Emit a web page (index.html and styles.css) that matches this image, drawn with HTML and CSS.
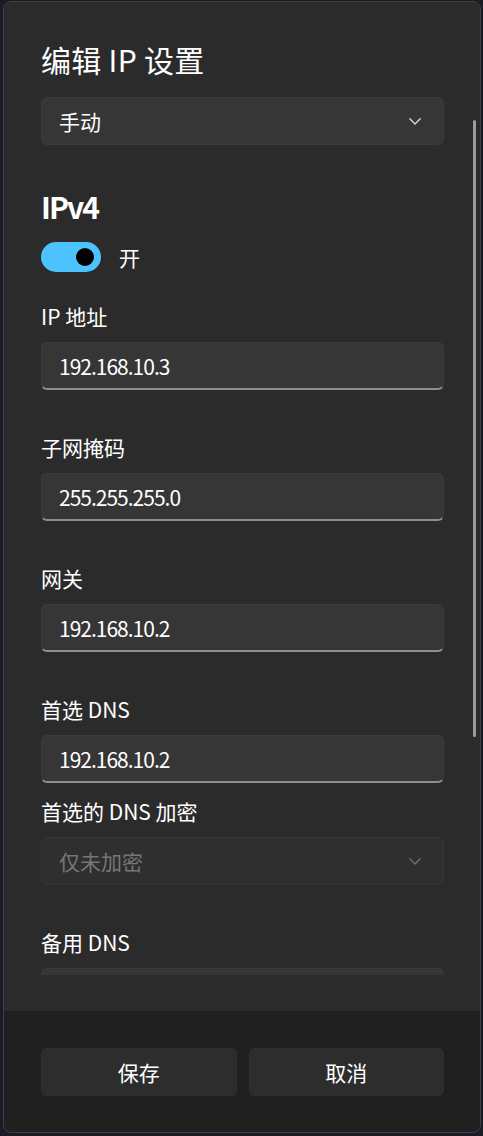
FILE: index.html
```html
<!DOCTYPE html>
<html lang="zh-CN">
<head>
<meta charset="utf-8">
<title>编辑 IP 设置</title>
<link rel="stylesheet" href="styles.css">
</head>
<body>
<div class="dialog">
  <div class="content">
    <div class="scroll">
      <h1 class="title">编辑 IP 设置</h1>
      <div class="combo">
        <span>手动</span>
        <svg class="chev" width="12" height="7" viewBox="0 0 12 7"><path d="M0.8 0.8 L6 6 L11.2 0.8" fill="none" stroke="#d6d6d6" stroke-width="1.4" stroke-linecap="round" stroke-linejoin="round"/></svg>
      </div>
      <h2 class="section">IPv4</h2>
      <div class="toggle-row">
        <div class="toggle"><div class="knob"></div></div>
        <span class="toggle-label">开</span>
      </div>
      <div class="label first">IP 地址</div>
      <div class="field">192.168.10.3</div>
      <div class="label">子网掩码</div>
      <div class="field">255.255.255.0</div>
      <div class="label">网关</div>
      <div class="field">192.168.10.2</div>
      <div class="label">首选 DNS</div>
      <div class="field">192.168.10.2</div>
      <div class="label tight">首选的 DNS 加密</div>
      <div class="combo disabled">
        <span>仅未加密</span>
        <svg class="chev" width="12" height="7" viewBox="0 0 12 7"><path d="M0.8 0.8 L6 6 L11.2 0.8" fill="none" stroke="#707070" stroke-width="1.4" stroke-linecap="round" stroke-linejoin="round"/></svg>
      </div>
      <div class="label">备用 DNS</div>
      <div class="field"></div>
    </div>
    <div class="scrollbar"></div>
  </div>
  <div class="footer">
    <div class="btn">保存</div>
    <div class="btn">取消</div>
  </div>
</div>
</body>
</html>
```
FILE: styles.css
```css
html, body {
  margin: 0;
  padding: 0;
}
body {
  width: 483px;
  height: 1136px;
  overflow: hidden;
  background: #1a1b25;
  font-family: "Noto Sans CJK SC", "Noto Sans", sans-serif;
  color: #ffffff;
}
.dialog {
  margin: 1px 2px 0 3px;
  height: 1132px;
  box-sizing: border-box;
  border: 1px solid #404040;
  border-radius: 8px;
  overflow: hidden;
  display: flex;
  flex-direction: column;
  background: #2b2b2b;
}
.content {
  position: relative;
  flex: 0 0 1009px;
  box-sizing: border-box;
  padding-bottom: 36px;
  background: #2b2b2b;
}
.scroll {
  height: 973px;
  box-sizing: border-box;
  overflow: hidden;
  padding: 37px 36px 0 37px;
  display: flex;
  flex-direction: column;
}
.title {
  margin: 0;
  font-size: 30px;
  line-height: 40px;
  font-weight: 400;
  letter-spacing: 0.3px;
}
.combo {
  margin-top: 18px;
  height: 48px;
  flex: 0 0 48px;
  box-sizing: border-box;
  border: 1px solid #3a3a3a;
  border-radius: 6px;
  background: #363636;
  display: flex;
  align-items: center;
  justify-content: space-between;
  padding: 0 22px 0 17px;
  font-size: 21px;
}
.combo.disabled {
  margin-top: 11px;
  background: #2f2f2f;
  border-color: #353535;
  color: #767676;
}
.section {
  margin: 41px 0 0 0;
  font-size: 30px;
  line-height: 40px;
  font-weight: 700;
  letter-spacing: -2px;
}
.toggle-row {
  margin-top: 16px;
  display: flex;
  align-items: center;
  gap: 18px;
  height: 30px;
}
.toggle {
  width: 60px;
  height: 30px;
  border-radius: 15px;
  background: #4cc2ff;
  display: flex;
  align-items: center;
  justify-content: flex-end;
  padding-right: 7px;
  box-sizing: border-box;
}
.knob {
  width: 18px;
  height: 18px;
  border-radius: 50%;
  background: #000000;
}
.toggle-label {
  font-size: 21px;
  line-height: 30px;
}
.label {
  margin-top: 42px;
  font-size: 21px;
  line-height: 30px;
}
.label.first {
  margin-top: 29px;
}
.label.tight {
  margin-top: 13px;
}
.field {
  margin-top: 11px;
  height: 48px;
  flex: 0 0 48px;
  box-sizing: border-box;
  border: 1px solid #3b3b3b;
  border-bottom: 2px solid #8e8e8e;
  border-radius: 6px;
  background: #363636;
  display: flex;
  align-items: center;
  padding: 0 17px;
  font-size: 21px;
  letter-spacing: -1px;
}
.scrollbar {
  position: absolute;
  top: 118px;
  right: 4px;
  width: 3px;
  height: 617px;
  border-radius: 2px;
  background: #9c9c9c;
}
.footer {
  flex: 1;
  background: #202020;
  padding: 37px 36px 0 37px;
  display: flex;
  gap: 12px;
  align-items: flex-start;
}
.btn {
  flex: 1;
  height: 48px;
  box-sizing: border-box;
  border: 1px solid #303030;
  border-radius: 6px;
  background: #2d2d2d;
  display: flex;
  align-items: center;
  justify-content: center;
  font-size: 21px;
}
```
